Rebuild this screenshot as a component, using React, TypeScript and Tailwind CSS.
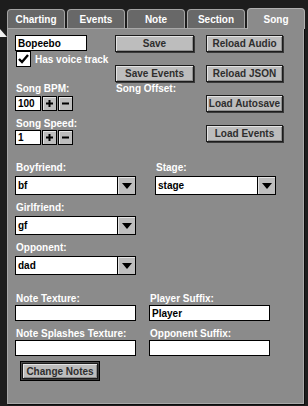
import React from 'react';

const tabs = ['Charting', 'Events', 'Note', 'Section', 'Song'];

const Btn: React.FC<{ label: string; className?: string }> = ({ label, className = '' }) => (
    <div
        className={`flex items-center justify-center border border-[#1c1c1c] bg-[#bdbdbd] text-[#2e2e2e] shadow-[inset_1px_1px_0_#e4e4e4,inset_-1px_-1px_0_#8e8e8e,1px_1px_0_#3a3a3a] ${className}`}
    >
        {label}
    </div>
);

const Label: React.FC<{ text: string; className?: string }> = ({ text, className = '' }) => (
    <div className={`h-[12px] leading-[12px] text-white ${className}`}>{text}</div>
);

const Field: React.FC<{ value?: string; className?: string }> = ({ value = '', className = '' }) => (
    <div className={`flex items-center border border-black bg-white pl-[2px] text-black ${className}`}>{value}</div>
);

const Stepper: React.FC<{ value: string }> = ({ value }) => (
    <div className="flex h-[15px]">
        <div className="flex w-[26px] items-center border border-black bg-white pl-[2px] text-black">{value}</div>
        <div className="ml-[1px] flex w-[15px] items-center justify-center border border-black bg-[#bdbdbd] shadow-[inset_1px_1px_0_#e4e4e4]">
            <svg width="7" height="7" viewBox="0 0 7 7">
                <rect x="2.5" y="0" width="2" height="7" fill="#000" />
                <rect x="0" y="2.5" width="7" height="2" fill="#000" />
            </svg>
        </div>
        <div className="ml-[1px] flex w-[15px] items-center justify-center border border-black bg-[#bdbdbd] shadow-[inset_1px_1px_0_#e4e4e4]">
            <svg width="7" height="7" viewBox="0 0 7 7">
                <rect x="0" y="2.5" width="7" height="2" fill="#000" />
            </svg>
        </div>
    </div>
);

const Dropdown: React.FC<{ value: string }> = ({ value }) => (
    <div className="flex h-[19px] w-[121px] border border-black bg-white">
        <div className="flex flex-1 items-center pl-[2px] text-black">{value}</div>
        <div className="flex w-[18px] items-center justify-center border-l border-black bg-[#bdbdbd] shadow-[inset_1px_1px_0_#e4e4e4]">
            <svg width="10" height="6" viewBox="0 0 10 6">
                <polygon points="0,0 10,0 5,6" fill="#000" />
            </svg>
        </div>
    </div>
);

export default function App() {
    return (
        <div className="flex h-[406px] w-[308px] overflow-hidden bg-[#1d1d1d] font-['Liberation_Sans',Arial,sans-serif] text-[10px] font-bold">
            <div className="w-[7px] pt-[29px]">
                <svg width="7" height="8" viewBox="0 0 7 8">
                    <polygon points="0,0 7,8 0,8" fill="#f0f0f0" />
                </svg>
            </div>
            <div className="flex flex-col pt-[8px]">
                <div className="flex h-[20px] gap-[2px]">
                    {tabs.map((t) => (
                        <div
                            key={t}
                            className={
                                t === 'Song'
                                    ? 'relative z-10 flex h-[21px] w-[58px] items-center justify-center rounded-t-[4px] border border-b-0 border-[#b0b0b0] bg-[#8b8b8b] text-white'
                                    : 'mt-[1px] flex h-[19px] w-[58px] items-center justify-center rounded-t-[4px] border border-b-0 border-[#a4a4a4] bg-[#686868] text-white'
                            }
                        >
                            {t}
                        </div>
                    ))}
                </div>
                <div className="h-[376px] w-[297px] border border-[#a8a8a8] bg-[#8b8b8b] pt-[6px] shadow-[1px_1px_0_#0c0c0c]">
                    <div className="flex pl-[7px]">
                        <div className="flex w-[100px] flex-col">
                            <Field value="Bopeebo" className="h-[16px] w-[72px]" />
                            <div className="flex h-[16px] items-center">
                                <div className="ml-[1px] flex h-[16px] w-[15px] items-center justify-center border border-black bg-white">
                                    <svg width="11" height="10" viewBox="0 0 11 10">
                                        <polyline points="1,5 4,8 10,1" fill="none" stroke="#000" strokeWidth="2.4" />
                                    </svg>
                                </div>
                                <span className="ml-[4px] text-white">Has voice track</span>
                            </div>
                            <Label text="Song BPM:" className="mt-[16px] pl-[1px]" />
                            <div className="mt-[1px]">
                                <Stepper value="100" />
                            </div>
                            <Label text="Song Speed:" className="mt-[7px] pl-[1px]" />
                            <Stepper value="1" />
                        </div>
                        <div className="flex w-[79px] flex-col">
                            <Btn label="Save" className="h-[17px]" />
                            <Btn label="Save Events" className="mt-[13px] h-[17px]" />
                            <Label text="Song Offset:" className="mt-[1px] pl-[1px]" />
                        </div>
                        <div className="ml-[12px] flex w-[77px] flex-col gap-[13px]">
                            <Btn label="Reload Audio" className="h-[17px]" />
                            <Btn label="Reload JSON" className="h-[17px]" />
                            <Btn label="Load Autosave" className="h-[17px]" />
                            <Btn label="Load Events" className="h-[17px]" />
                        </div>
                    </div>

                    <div className="mt-[17px] flex pl-[7px]">
                        <div className="flex w-[140px] flex-col">
                            <Label text="Boyfriend:" className="pl-[1px]" />
                            <div className="mt-[2px]">
                                <Dropdown value="bf" />
                            </div>
                            <Label text="Girlfriend:" className="mt-[7px] pl-[1px]" />
                            <div className="mt-[2px]">
                                <Dropdown value="gf" />
                            </div>
                            <Label text="Opponent:" className="mt-[7px] pl-[1px]" />
                            <div className="mt-[2px]">
                                <Dropdown value="dad" />
                            </div>
                        </div>
                        <div className="flex flex-col">
                            <Label text="Stage:" className="pl-[1px]" />
                            <div className="mt-[2px]">
                                <Dropdown value="stage" />
                            </div>
                        </div>
                    </div>

                    <div className="mt-[18px] flex pl-[7px]">
                        <div className="flex w-[134px] flex-col">
                            <Label text="Note Texture:" className="pl-[1px]" />
                            <Field className="h-[16px] w-[121px]" />
                            <Label text="Note Splashes Texture:" className="mt-[7px] pl-[1px]" />
                            <Field className="h-[16px] w-[121px]" />
                        </div>
                        <div className="flex flex-col">
                            <Label text="Player Suffix:" className="pl-[1px]" />
                            <Field value="Player" className="h-[16px] w-[121px]" />
                            <Label text="Opponent Suffix:" className="mt-[7px] pl-[1px]" />
                            <Field className="h-[16px] w-[121px]" />
                        </div>
                    </div>

                    <div className="mt-[5px] pl-[12px]">
                        <div className="w-[80px] border border-black bg-[#4a4a4a] p-[1px]">
                            <Btn label="Change Notes" className="h-[16px]" />
                        </div>
                    </div>
                </div>
            </div>
        </div>
    );
}
